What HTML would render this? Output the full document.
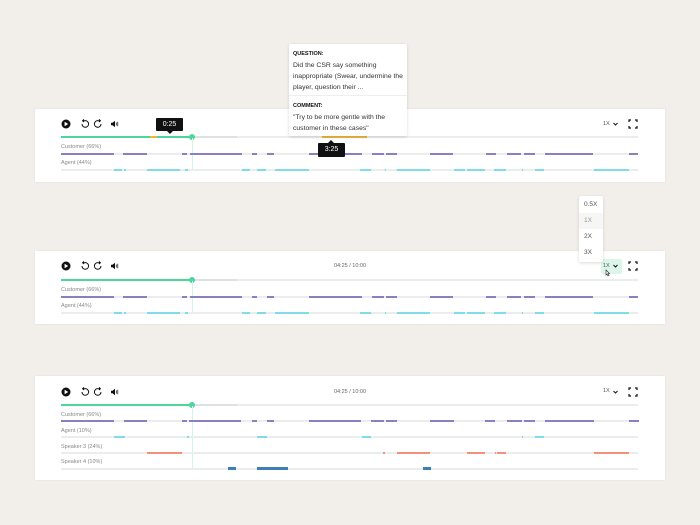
<!DOCTYPE html><html><head><style>
body{margin:0;width:700px;height:525px;background:#f2efeb;position:relative;overflow:hidden;font-family:"Liberation Sans",sans-serif}
.p{position:absolute;left:35px;width:630px;background:#fff;box-shadow:0 0 2px rgba(0,0,0,.08)}
.a{position:absolute}
.t{position:absolute;left:61px;width:577px;height:2px;background:#e9eeec}
.l{position:absolute;left:61px;font-size:5.5px;color:#888}
.c{position:absolute;height:2px;background:#8a7fc0}
.g{position:absolute;height:2px;background:#7fdce8}
.o{position:absolute;height:2px;background:#f3927c}
.b{position:absolute;height:3px;background:#3f7fb3}
.tm{position:absolute;left:320px;width:60px;text-align:center;font-size:5.5px;color:#666}
.sp{position:absolute;font-size:5.5px;color:#555}
</style></head><body>

<div class="p" style="top:109px;height:73px"></div>
<div class="p" style="top:251px;height:73px"></div>
<div class="p" style="top:376px;height:104px"></div>

<svg class="a" style="left:0;top:0" width="700" height="525">
<defs>
<g id="ctl">
<circle cx="66" cy="0" r="4.5" fill="#111"/><path d="M64.6 -2.2 L68.2 0 L64.6 2.2Z" fill="#fff"/>
<path d="M82 0 A3.3 3.3 0 1 0 85 -3.3 L83.5 -3.3 M84 -4.6 L82.6 -3.3 L84 -2" fill="none" stroke="#111" stroke-width="1"/>
<path d="M101 0 A3.3 3.3 0 1 1 98 -3.3 L99.5 -3.3 M99 -4.6 L100.4 -3.3 L99 -2" fill="none" stroke="#111" stroke-width="1"/>
<path d="M111 -1.3 h1.5 l2.5 -2 v6.6 l-2.5 -2 h-1.5z" fill="#111"/><path d="M116.3 -1.5 v3 M117.8 -2.3 v4.6" stroke="#111" stroke-width=".7"/>
<path d="M613.5 -1 l2 2 l2 -2" fill="none" stroke="#111" stroke-width="1"/>
<path d="M629 -2 v-2 h2 M635 -4 h2 v2 M637 2 v2 h-2 M631 4 h-2 v-2" fill="none" stroke="#111" stroke-width="1.2"/>
</g>
</defs>
<use href="#ctl" y="124"/><use href="#ctl" y="266"/><use href="#ctl" y="392"/>
</svg>

<div class="sp" style="left:603px;top:121px">1X</div>
<div class="a" style="left:601px;top:259px;width:21px;height:15px;background:#dcf5ea;border-radius:2px"></div>
<div class="sp" style="left:603px;top:263px">1X</div>
<svg class="a" style="left:0;top:0" width="700" height="525"><path d="M613.5 265 l2 2 l2 -2" fill="none" stroke="#111" stroke-width="1"/>
<path d="M606 270 v5 l1 -1 1 2 1 -.5 -1 -2 h1.5z" fill="#fff" stroke="#222" stroke-width=".6"/></svg>
<div class="sp" style="left:603px;top:388px">1X</div>
<div class="tm" style="top:263px">04:25 / 10:00</div>
<div class="tm" style="top:389px">04:25 / 10:00</div>

<div class="t" style="top:136px"></div>
<div class="a" style="left:61px;top:136px;width:176px;height:2px;background:#dde2e0"></div>
<div class="a" style="left:61px;top:136px;width:131px;height:2px;background:#4cd69c"></div>
<div class="a" style="left:150px;top:136px;width:7px;height:2px;background:#f0b63c"></div>
<div class="a" style="left:322px;top:136px;width:45px;height:2px;background:#f0b63c"></div>
<div class="a" style="left:189px;top:134px;width:6px;height:6px;border-radius:50%;background:#4cd69c"></div>
<div class="a" style="left:191.5px;top:138px;width:1px;height:33px;background:#d4f3ea"></div>
<div class="l" style="top:144px">Customer (66%)</div>
<div class="l" style="top:160px">Agent (44%)</div>
<div class="t" style="top:153px"></div><div class="t" style="top:169px"></div>

<div class="t" style="top:279px"></div>
<div class="a" style="left:61px;top:279px;width:176px;height:2px;background:#dde2e0"></div>
<div class="a" style="left:61px;top:279px;width:131px;height:2px;background:#4cd69c"></div>
<div class="a" style="left:189px;top:277px;width:6px;height:6px;border-radius:50%;background:#4cd69c"></div>
<div class="a" style="left:191.5px;top:281px;width:1px;height:33px;background:#d4f3ea"></div>
<div class="l" style="top:287px">Customer (66%)</div>
<div class="l" style="top:303px">Agent (44%)</div>
<div class="t" style="top:296px"></div><div class="t" style="top:312px"></div>

<div class="t" style="top:404px"></div>
<div class="a" style="left:61px;top:404px;width:176px;height:2px;background:#dde2e0"></div>
<div class="a" style="left:61px;top:404px;width:131px;height:2px;background:#4cd69c"></div>
<div class="a" style="left:189px;top:402px;width:6px;height:6px;border-radius:50%;background:#4cd69c"></div>
<div class="a" style="left:191.5px;top:406px;width:1px;height:64px;background:#d4f3ea"></div>
<div class="l" style="top:412px">Customer (66%)</div>
<div class="l" style="top:428px">Agent (10%)</div>
<div class="l" style="top:444px">Speaker 3 (24%)</div>
<div class="l" style="top:459px">Speaker 4 (10%)</div>
<div class="t" style="top:420px"></div><div class="t" style="top:436px"></div><div class="t" style="top:452px"></div><div class="t" style="top:468px"></div>

<div style="position:absolute;top:153px;left:0">
<div class="c" style="left:61px;width:53px"></div><div class="c" style="left:123px;width:24px"></div><div class="c" style="left:182px;width:5px"></div><div class="c" style="left:190px;width:52px"></div><div class="c" style="left:252px;width:5px"></div><div class="c" style="left:267px;width:7px"></div><div class="c" style="left:309px;width:53px"></div><div class="c" style="left:372px;width:12px"></div><div class="c" style="left:386px;width:11px"></div><div class="c" style="left:430px;width:23px"></div><div class="c" style="left:486px;width:10px"></div><div class="c" style="left:507px;width:14px"></div><div class="c" style="left:524px;width:11px"></div><div class="c" style="left:545px;width:48px"></div><div class="c" style="left:629px;width:9px"></div>
<div class="g" style="left:114px;top:16px;width:8px"></div><div class="g" style="left:124px;top:16px;width:2px"></div><div class="g" style="left:147px;top:16px;width:33px"></div><div class="g" style="left:185px;top:16px;width:3px"></div><div class="g" style="left:242px;top:16px;width:8px"></div><div class="g" style="left:257px;top:16px;width:9px"></div><div class="g" style="left:275px;top:16px;width:34px"></div><div class="g" style="left:360px;top:16px;width:11px"></div><div class="g" style="left:385px;top:16px;width:1px"></div><div class="g" style="left:397px;top:16px;width:33px"></div><div class="g" style="left:454px;top:16px;width:11px"></div><div class="g" style="left:467px;top:16px;width:18px"></div><div class="g" style="left:494px;top:16px;width:12px"></div><div class="g" style="left:522px;top:16px;width:1px"></div><div class="g" style="left:535px;top:16px;width:9px"></div><div class="g" style="left:594px;top:16px;width:35px"></div>
</div>
<div style="position:absolute;top:296px;left:0">
<div class="c" style="left:61px;width:53px"></div><div class="c" style="left:123px;width:24px"></div><div class="c" style="left:182px;width:5px"></div><div class="c" style="left:190px;width:52px"></div><div class="c" style="left:252px;width:5px"></div><div class="c" style="left:267px;width:7px"></div><div class="c" style="left:309px;width:53px"></div><div class="c" style="left:372px;width:12px"></div><div class="c" style="left:386px;width:11px"></div><div class="c" style="left:430px;width:23px"></div><div class="c" style="left:486px;width:10px"></div><div class="c" style="left:507px;width:14px"></div><div class="c" style="left:524px;width:11px"></div><div class="c" style="left:545px;width:48px"></div><div class="c" style="left:629px;width:9px"></div>
<div class="g" style="left:114px;top:16px;width:8px"></div><div class="g" style="left:124px;top:16px;width:2px"></div><div class="g" style="left:147px;top:16px;width:33px"></div><div class="g" style="left:185px;top:16px;width:3px"></div><div class="g" style="left:242px;top:16px;width:8px"></div><div class="g" style="left:257px;top:16px;width:9px"></div><div class="g" style="left:275px;top:16px;width:34px"></div><div class="g" style="left:360px;top:16px;width:11px"></div><div class="g" style="left:385px;top:16px;width:1px"></div><div class="g" style="left:397px;top:16px;width:33px"></div><div class="g" style="left:454px;top:16px;width:11px"></div><div class="g" style="left:467px;top:16px;width:18px"></div><div class="g" style="left:494px;top:16px;width:12px"></div><div class="g" style="left:522px;top:16px;width:1px"></div><div class="g" style="left:535px;top:16px;width:9px"></div><div class="g" style="left:594px;top:16px;width:35px"></div>
</div>
<div style="position:absolute;top:420px;left:0">
<div class="c" style="left:61px;width:53px"></div><div class="c" style="left:124px;width:23px"></div><div class="c" style="left:182px;width:5px"></div><div class="c" style="left:189px;width:52px"></div><div class="c" style="left:252px;width:5px"></div><div class="c" style="left:267px;width:7px"></div><div class="c" style="left:309px;width:52px"></div><div class="c" style="left:371px;width:13px"></div><div class="c" style="left:386px;width:11px"></div><div class="c" style="left:430px;width:24px"></div><div class="c" style="left:485px;width:10px"></div><div class="c" style="left:507px;width:15px"></div><div class="c" style="left:524px;width:11px"></div><div class="c" style="left:545px;width:49px"></div><div class="c" style="left:629px;width:10px"></div>
<div class="g" style="left:114px;top:16px;width:11px"></div><div class="g" style="left:187px;top:16px;width:2px"></div><div class="g" style="left:257px;top:16px;width:10px"></div><div class="g" style="left:362px;top:16px;width:9px"></div><div class="g" style="left:522px;top:16px;width:1px"></div><div class="g" style="left:535px;top:16px;width:9px"></div>
<div class="o" style="left:147px;top:32px;width:35px"></div><div class="o" style="left:383px;top:32px;width:2px"></div><div class="o" style="left:397px;top:32px;width:33px"></div><div class="o" style="left:467px;top:32px;width:18px"></div><div class="o" style="left:495px;top:32px;width:1px"></div><div class="o" style="left:497px;top:32px;width:9px"></div><div class="o" style="left:594px;top:32px;width:35px"></div>
<div class="b" style="left:228px;top:47px;width:8px"></div><div class="b" style="left:257px;top:47px;width:31px"></div><div class="b" style="left:423px;top:47px;width:8px"></div>
</div>

<div class="a" style="left:156px;top:118px;width:27px;height:13px;background:#111;border-radius:1px;color:#fff;font-size:7px;text-align:center;line-height:13px">0:25</div>
<div class="a" style="left:167px;top:131px;border:3px solid transparent;border-top-color:#111;border-bottom:0"></div>
<div class="a" style="left:328px;top:140px;border:3px solid transparent;border-bottom-color:#111;border-top:0"></div>
<div class="a" style="left:318px;top:143px;width:27px;height:14px;background:#111;border-radius:1px;color:#fff;font-size:7px;text-align:center;line-height:14px">3:25</div>

<div class="a" style="left:289px;top:44px;width:118px;height:92px;background:#fff;box-shadow:0 1px 3px rgba(0,0,0,.15);border-radius:2px;font-size:6.8px;color:#333;line-height:11px">
<div style="padding:4px 4px 0"><b style="font-size:5.5px;color:#111">QUESTION:</b><br>Did the CSR say something inappropriate (Swear, undermine the player, question their ...</div>
<div style="border-top:1px solid #eee;margin-top:2px;padding:4px 4px 0"><b style="font-size:5.5px;color:#111">COMMENT:</b><br>"Try to be more gentle with the customer in these cases"</div>
</div>

<div class="a" style="left:579px;top:196px;width:24px;height:66px;background:#fff;box-shadow:0 1px 3px rgba(0,0,0,.15);border-radius:2px;font-size:6.5px;color:#555">
<div style="height:17px;line-height:17px;padding-left:5px">0.5X</div>
<div style="height:16px;line-height:16px;padding-left:5px;background:#f6f6f4;color:#999">1X</div>
<div style="height:16px;line-height:16px;padding-left:5px">2X</div>
<div style="height:16px;line-height:16px;padding-left:5px">3X</div>
</div>
</body></html>
